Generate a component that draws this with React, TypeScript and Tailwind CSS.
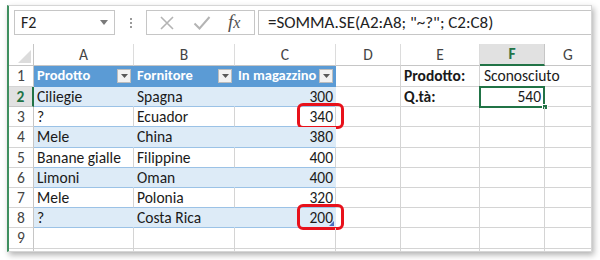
import React from "react";

const rows = [
  { n: 1, a: "Prodotto", b: "Fornitore", c: "In magazzino", e: "Prodotto:", f: "Sconosciuto", kind: "head", h: "h-[21px]" },
  { n: 2, a: "Ciliegie", b: "Spagna", c: "300", e: "Q.tà:", f: "540", kind: "band", h: "h-[20px]" },
  { n: 3, a: "?", b: "Ecuador", c: "340", kind: "plain", h: "h-[20px]", mark: true },
  { n: 4, a: "Mele", b: "China", c: "380", kind: "band", h: "h-[21px]" },
  { n: 5, a: "Banane gialle", b: "Filippine", c: "400", kind: "plain", h: "h-[20px]" },
  { n: 6, a: "Limoni", b: "Oman", c: "400", kind: "band", h: "h-[20px]" },
  { n: 7, a: "Mele", b: "Polonia", c: "320", kind: "plain", h: "h-[20px]" },
  { n: 8, a: "?", b: "Costa Rica", c: "200", kind: "band", h: "h-[20px]", mark: true, last: true },
  { n: 9, kind: "empty", h: "h-[21px]" },
  { n: 10, kind: "empty", h: "h-[21px]" },
];

function FilterButton() {
  return (
    <span className="absolute right-[2px] top-[3px] flex h-[14px] w-[14px] items-center justify-center border border-[#bdbdbd] bg-[#f2f2f2]">
      <svg width="7" height="4" viewBox="0 0 7 4">
        <polygon points="0,0 7,0 3.5,4" fill="#595959" />
      </svg>
    </span>
  );
}

function RedMark() {
  return (
    <span className="pointer-events-none absolute left-[62px] top-[-4px] h-[26px] w-[47px] rounded-[6px] border-[3px] border-[#e8111b]" />
  );
}

function tableCell(kind: string) {
  if (kind === "head") return "bg-[#5b9bd5] text-white text-[14.5px] font-bold border-b border-b-[#5b9bd5] border-r border-r-[#5b9bd5]";
  if (kind === "band") return "bg-[#ddebf7] border-b border-b-[#9bc2e6] border-r border-r-[#ddebf7]";
  if (kind === "plain") return "bg-white border-b border-b-[#9bc2e6] border-r border-r-[#d4d4d4]";
  return "border-b border-b-[#d4d4d4] border-r border-r-[#d4d4d4]";
}

export default function App() {
  return (
    <div className="h-[260px] w-[600px] overflow-hidden bg-white pl-[7px] pt-[5px] text-[15.5px] text-[#1a1a1a] [font-family:Carlito,Lato,sans-serif]">
      <div className="flex h-[247px] w-[585px] flex-col overflow-hidden border-l-2 border-t border-r border-b border-l-[#3f8f5f] border-t-[#d6d6d6] border-r-[#d6d6d6] border-b-[#d6d6d6] bg-white shadow-[2px_3px_6px_rgba(0,0,0,0.3)]">
        {/* formula bar */}
        <div className="flex h-[38px] shrink-0 items-start pt-[4px] pl-[5px]">
          <div className="flex h-[25px] w-[101px] items-center justify-between border border-[#c6c6c6] pl-[6px] pr-[6px] text-[16px] text-[#222]">
            <span>F2</span>
            <svg width="8" height="5" viewBox="0 0 8 5">
              <polygon points="0,0 8,0 4,5" fill="#7a7a7a" />
            </svg>
          </div>
          <div className="flex h-[25px] w-[31px] flex-col items-center justify-center gap-[2px]">
            <span className="h-[2px] w-[2px] bg-[#9a9a9a]" />
            <span className="h-[2px] w-[2px] bg-[#9a9a9a]" />
            <span className="h-[2px] w-[2px] bg-[#9a9a9a]" />
          </div>
          <div className="flex h-[25px] w-[109px] items-center border border-[#c6c6c6]">
            <svg className="ml-[12px]" width="16" height="16" viewBox="0 0 16 16">
              <path d="M2 2 L14 14 M14 2 L2 14" stroke="#b4b4b4" strokeWidth="1.6" fill="none" />
            </svg>
            <svg className="ml-[18px]" width="18" height="16" viewBox="0 0 18 16">
              <path d="M1.5 8.5 L6.5 13.5 L16.5 2" stroke="#b4b4b4" strokeWidth="2" fill="none" />
            </svg>
            <span className="ml-[17px] text-[19px] italic text-[#505050] [font-family:'Liberation_Serif',serif]">
              f<span className="text-[16px]">x</span>
            </span>
          </div>
          <div className="ml-[3px] flex h-[25px] flex-1 items-center border-t border-b border-l border-[#c6c6c6] pl-[9px] text-[17px] text-[#222]">
            =SOMMA.SE(A2:A8; "~?"; C2:C8)
          </div>
        </div>

        {/* column headers */}
        <div className="flex h-[22px] shrink-0 text-[#444]">
          <div className="relative w-[25px] border-b border-r border-[#c6c6c6]">
            <svg className="absolute bottom-[2px] right-[2px]" width="13" height="13" viewBox="0 0 13 13">
              <polygon points="13,0 13,13 0,13" fill="#dcdcdc" />
            </svg>
          </div>
          <div className="flex w-[100px] items-center justify-center border-b border-r border-b-[#c6c6c6] border-r-[#dcdcdc]">A</div>
          <div className="flex w-[101px] items-center justify-center border-b border-r border-b-[#c6c6c6] border-r-[#dcdcdc]">B</div>
          <div className="flex w-[101px] items-center justify-center border-b border-r border-b-[#c6c6c6] border-r-[#dcdcdc]">C</div>
          <div className="flex w-[65px] items-center justify-center border-b border-r border-b-[#c6c6c6] border-r-[#dcdcdc]">D</div>
          <div className="flex w-[79px] items-center justify-center border-b border-r border-b-[#c6c6c6] border-r-[#dcdcdc]">E</div>
          <div className="flex w-[65px] items-center justify-center border-b-2 border-r border-b-[#217346] border-r-[#c6c6c6] bg-[#e1e1e1] font-bold text-[#217346]">F</div>
          <div className="flex flex-1 items-center justify-center border-b border-b-[#c6c6c6]">G</div>
        </div>

        {/* rows */}
        {rows.map((r) => {
          const sel = r.n === 2;
          const t = tableCell(r.kind);
          const num = "flex items-center justify-end pr-[2px]";
          const txt = "flex items-center pl-[3px] whitespace-nowrap";
          return (
            <div key={r.n} className={`flex shrink-0 ${r.h}`}>
              <div
                className={
                  sel
                    ? "flex w-[25px] items-center justify-center border-b border-r-2 border-b-[#c6c6c6] border-r-[#217346] bg-[#e1e1e1] font-bold text-[#217346]"
                    : "flex w-[25px] items-center justify-center border-b border-r border-b-[#d4d4d4] border-r-[#c6c6c6] text-[#444]"
                }
              >
                {r.n}
              </div>
              <div className={`relative w-[100px] ${txt} ${t}`}>
                {r.a}
                {r.kind === "head" && <FilterButton />}
              </div>
              <div className={`relative w-[101px] ${txt} ${t}`}>
                {r.b}
                {r.kind === "head" && <FilterButton />}
              </div>
              <div
                className={`relative w-[101px] ${r.kind === "head" ? txt : num} ${t} ${
                  r.kind === "band" || r.kind === "plain" ? "border-r-[#9bc2e6]" : ""
                }`}
              >
                {r.c}
                {r.kind === "head" && <FilterButton />}
                {r.mark && <RedMark />}
                {r.last && (
                  <svg className="absolute bottom-[1px] right-[1px]" width="5" height="5" viewBox="0 0 5 5">
                    <polygon points="5,0 5,5 0,5" fill="#4a6fc0" />
                  </svg>
                )}
              </div>
              <div className="w-[65px] border-b border-r border-[#d4d4d4]" />
              <div className="flex w-[79px] items-center whitespace-nowrap border-b border-r border-[#d4d4d4] pl-[3px] font-bold">
                {r.e}
              </div>
              {r.n === 1 ? (
                <div className="flex w-[65px] items-center whitespace-nowrap border-b border-b-[#d4d4d4] pl-[4px]">
                  {r.f}
                </div>
              ) : (
                <div className="relative flex w-[65px] items-center justify-end border-b border-r border-[#d4d4d4] pr-[3px]">
                  {r.f}
                  {sel && (
                    <>
                      <span className="pointer-events-none absolute left-[-1px] top-[-1px] h-[22px] w-[66px] border-2 border-[#217346]" />
                      <span className="absolute bottom-[-4px] right-[-4px] h-[6px] w-[6px] border border-white bg-[#217346]" />
                    </>
                  )}
                </div>
              )}
              <div className="flex-1 border-b border-[#d4d4d4]" />
            </div>
          );
        })}
      </div>
    </div>
  );
}
